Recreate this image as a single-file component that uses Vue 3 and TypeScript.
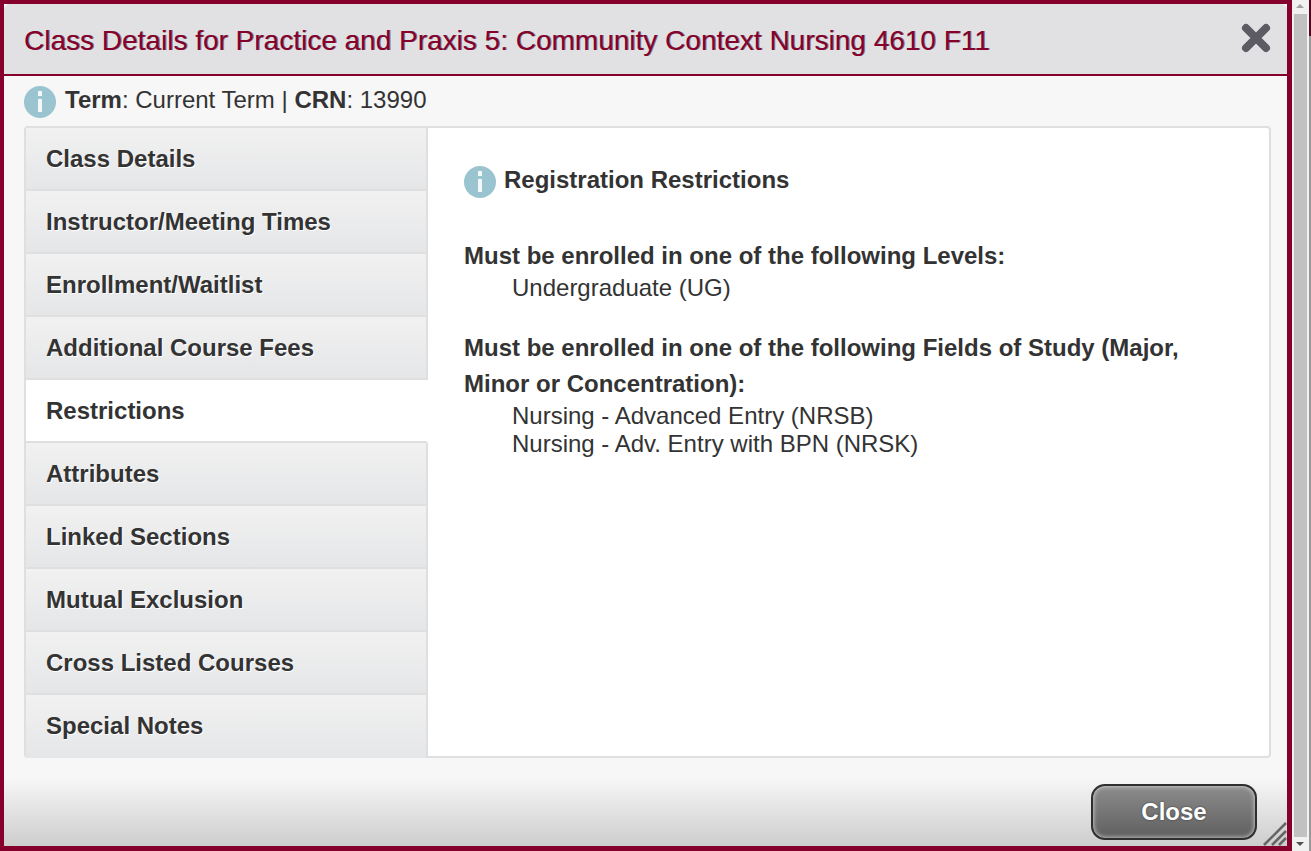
<script setup lang="ts">
const tabs: string[] = [
  'Class Details',
  'Instructor/Meeting Times',
  'Enrollment/Waitlist',
  'Additional Course Fees',
  'Restrictions',
  'Attributes',
  'Linked Sections',
  'Mutual Exclusion',
  'Cross Listed Courses',
  'Special Notes',
]
const activeTab = 'Restrictions'
</script>

<template>
  <div class="page">
    <div class="dialog">
      <header class="head">
        <h1 class="title">Class Details for Practice and Praxis 5: Community Context Nursing 4610 F11</h1>
        <svg class="close-x" viewBox="0 0 30 30" width="30" height="30" aria-label="Close">
          <path d="M5 5 L25 25 M25 5 L5 25" stroke="#5c5a62" stroke-width="8" stroke-linecap="round" fill="none" />
        </svg>
      </header>
      <div class="body">
        <div class="term">
          <svg class="info" viewBox="0 0 32 32" width="32" height="32">
            <defs><filter id="soft1"><feGaussianBlur stdDeviation="0.6" /></filter></defs>
            <circle cx="16" cy="16" r="16" fill="#9ac4cf" />
            <g filter="url(#soft1)" fill="#f4f8f9">
              <rect x="14" y="5" width="4" height="5" />
              <rect x="14" y="13" width="4" height="13" />
            </g>
          </svg>
          <span class="term-text"><b>Term</b>: Current Term | <b>CRN</b>: 13990</span>
        </div>
        <div class="panel">
          <nav class="tabs">
            <div v-for="t in tabs" :key="t" class="tab" :class="{ active: t === activeTab }">{{ t }}</div>
          </nav>
          <section class="content">
            <div class="section-head">
              <svg class="info" viewBox="0 0 32 32" width="32" height="32">
                <defs><filter id="soft2"><feGaussianBlur stdDeviation="0.6" /></filter></defs>
                <circle cx="16" cy="16" r="16" fill="#9ac4cf" />
                <g filter="url(#soft2)" fill="#f4f8f9">
                  <rect x="14" y="5" width="4" height="5" />
                  <rect x="14" y="13" width="4" height="13" />
                </g>
              </svg>
              <b>Registration Restrictions</b>
            </div>
            <div class="rule first"><b>Must be enrolled in one of the following Levels:</b></div>
            <div class="item">Undergraduate (UG)</div>
            <div class="rule second"><b>Must be enrolled in one of the following Fields of Study (Major, Minor or Concentration):</b></div>
            <div class="item">Nursing - Advanced Entry (NRSB)</div>
            <div class="item">Nursing - Adv. Entry with BPN (NRSK)</div>
          </section>
        </div>
      </div>
      <footer class="foot">
        <button class="close-btn" type="button">Close</button>
        <svg class="grip" viewBox="0 0 24 24" width="24" height="24">
          <path d="M1 23 L23 1 M9 23 L23 9 M16 23 L23 16" stroke="#666" stroke-width="2.6" fill="none" />
        </svg>
      </footer>
    </div>
    <div class="scrollbar">
      <div class="arrow up"></div>
      <div class="thumb"></div>
      <div class="arrow down"></div>
    </div>
    <div class="backdrop"></div>
  </div>
</template>

<style>
html, body { margin: 0; height: 100%; overflow: hidden; background: #fff; }
</style>

<style scoped>
.page {
  display: flex;
  width: 1311px;
  height: 851px;
  font-family: "Liberation Sans", Arial, sans-serif;
  color: #333;
  overflow: hidden;
}
.dialog {
  width: 1292px;
  height: 851px;
  flex: none;
  box-sizing: border-box;
  border: solid #85002b;
  border-width: 4px 5px 5px 4px;
  display: flex;
  flex-direction: column;
  background: #f7f7f7;
}
.head {
  height: 70px;
  flex: none;
  border-bottom: 2px solid #85002b;
  background: #e1e1e4;
  border-radius: 6px 6px 0 0;
  display: flex;
  align-items: center;
  justify-content: space-between;
  padding: 0 16px 0 20px;
}
.title {
  margin: 4px 0 0;
  font-size: 28px;
  font-weight: 400;
  color: #85002b;
  text-shadow: 1px 0 0 rgba(60, 60, 70, 0.65);
  white-space: nowrap;
}
.close-x { display: block; margin-top: -2px; }
.body {
  height: 682px;
  flex: none;
  display: flex;
  flex-direction: column;
  padding: 0 16px 0 20px;
}
.term {
  height: 50px;
  flex: none;
  display: flex;
  align-items: flex-start;
  gap: 9px;
  font-size: 24px;
}
.term .info { margin-top: 10px; }
.term-text { line-height: 48px; }
.term b, .content b { font-weight: 700; }
.info { display: block; flex: none; }
.panel {
  height: 632px;
  flex: none;
  box-sizing: border-box;
  border: 2px solid #dfdfdf;
  border-radius: 4px;
  background: #fff;
  display: flex;
}
.tabs { width: 402px; flex: none; }
.tab {
  height: 63px;
  box-sizing: border-box;
  padding-left: 20px;
  display: flex;
  align-items: center;
  font-size: 24px;
  font-weight: 700;
  text-shadow: 1px 1px 0 #fff;
  background: linear-gradient(#f1f1f1, #e5e6e8);
  border-right: 2px solid #dfdfdf;
  border-bottom: 2px solid #dfdfdf;
}
.tab:last-child { border-bottom: 0; padding-bottom: 2px; }
.tab.active {
  background: #fff;
  border-right-color: transparent;
}
.content {
  flex: 1;
  min-width: 0;
  padding: 36px 84px 0 36px;
  font-size: 24px;
}
.section-head {
  height: 32px;
  display: flex;
  align-items: flex-start;
  gap: 8px;
  line-height: 32px;
}
.section-head .info { margin-top: 2px; }
.rule { line-height: 36px; }
.rule.first { margin-top: 42px; }
.rule.second { margin-top: 28px; }
.item { padding-left: 48px; line-height: 28px; }
.foot {
  height: 88px;
  flex: none;
  position: relative;
  display: flex;
  align-items: flex-start;
  justify-content: flex-end;
  padding: 26px 30px 0 0;
  box-sizing: border-box;
  background: linear-gradient(#f7f7f7 0, #f7f7f7 22%, #cdcdcd 100%);
}
.close-btn {
  width: 166px;
  height: 56px;
  box-sizing: border-box;
  border: 2px solid #2f2f2f;
  border-radius: 14px;
  background: linear-gradient(#8c8c8c, #5f5f5f);
  box-shadow: inset 0 0 5px #ddd;
  color: #fff;
  font-family: inherit;
  font-size: 24px;
  font-weight: 700;
  text-shadow: 0 0 2px #333;
  padding: 0;
}
.grip {
  position: absolute;
  right: 0;
  bottom: 0;
  display: block;
}
.scrollbar {
  width: 17px;
  flex: none;
  display: flex;
  flex-direction: column;
  align-items: center;
  background: #f1f1f1;
}
.thumb { width: 13px; flex: 1; background: #c1c1c1; }
.arrow { height: 14px; width: 100%; position: relative; flex: none; }
.arrow::after {
  content: "";
  position: absolute;
  left: 4px;
  border-left: 4px solid transparent;
  border-right: 4px solid transparent;
}
.arrow.up::after { top: 4px; border-bottom: 4px solid #a3a3a3; }
.arrow.down::after { top: 5px; border-top: 4px solid #505050; }
.backdrop {
  flex: 1;
  background: linear-gradient(#55061f 0, #55061f 36px, #999 36px);
}
</style>
